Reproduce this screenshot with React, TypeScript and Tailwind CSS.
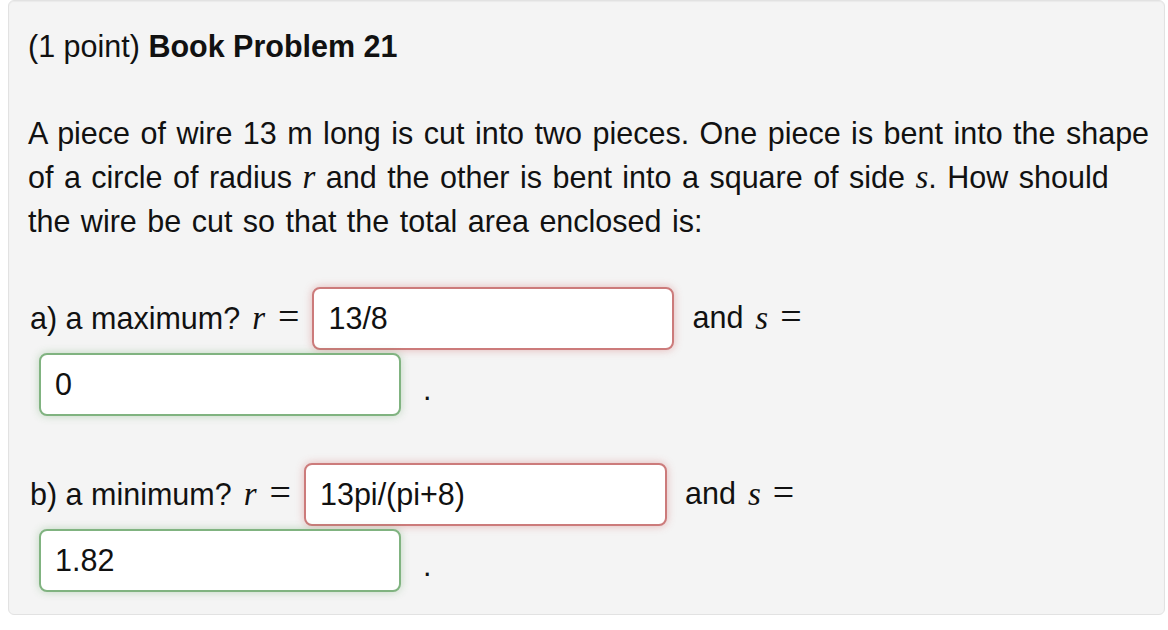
import React from "react";

function Answer({ value, status, width = "w-[362px]" }: { value: string; status: "bad" | "good"; width?: string }) {
  const cls =
    status === "bad"
      ? "border-[#cc7b7b] shadow-[0_0_9px_rgba(200,70,70,0.35)]"
      : "border-[#80b380] shadow-[0_0_9px_rgba(70,150,70,0.3)]";
  return (
    <div className={`${width} h-[63px] shrink-0 rounded-[8px] border-2 bg-white flex items-center pl-[14px] ${cls}`}>
      <span className="text-[30.5px] leading-none text-[#111]">{value}</span>
    </div>
  );
}

function MathVar({ v }: { v: string }) {
  return (
    <span className="font-['Liberation_Serif',serif] italic text-[33px] leading-none">{v}</span>
  );
}

function Eq() {
  return <span className="font-['Liberation_Serif',serif] text-[38px] leading-none">=</span>;
}

export default function App() {
  return (
    <div className="w-[1168px] h-[630px] bg-white font-['Liberation_Sans',Arial,sans-serif] text-[#111]">
      <div className="ml-[8px] w-[1157px] h-[615px] bg-[#f4f4f4] border border-[#e2e2e2] rounded-[6px] shadow-[inset_0_1px_1px_rgba(0,0,0,0.04)] pl-[19px] pr-[4px] pt-[23px]">
        <div className="text-[30.5px] leading-[44px]">
          (1 point) <span className="font-bold">Book Problem 21</span>
        </div>
        <p className="mt-[43px] text-[30.5px] leading-[44px] [word-spacing:2px] whitespace-nowrap">
          A piece of wire 13 m long is cut into two pieces. One piece is bent into the shape
          <br />
          of a circle of radius <MathVar v="r" /> and the other is bent into a square of side <MathVar v="s" />. How should
          <br />
          the wire be cut so that the total area enclosed is:
        </p>

        <div className="mt-[44px] flex items-center text-[30.5px]">
          <span className="ml-[2px]">a) a maximum?</span>
          <span className="ml-[12px]"><MathVar v="r" /></span>
          <span className="ml-[13px]"><Eq /></span>
          <span className="ml-[13px]"><Answer value="13/8" status="bad" /></span>
          <span className="ml-[18px] -mt-[2px]">and</span>
          <span className="ml-[12px]"><MathVar v="s" /></span>
          <span className="ml-[12px]"><Eq /></span>
        </div>
        <div className="mt-[3px] ml-[11px] flex items-end text-[30.5px]">
          <Answer value="0" status="good" />
          <span className="ml-[22px] mb-[12px] leading-none">.</span>
        </div>

        <div className="mt-[47px] flex items-center text-[30.5px]">
          <span className="ml-[2px]">b) a minimum?</span>
          <span className="ml-[12px]"><MathVar v="r" /></span>
          <span className="ml-[13px]"><Eq /></span>
          <span className="ml-[13px]"><Answer value="13pi/(pi+8)" status="bad" width="w-[363px]" /></span>
          <span className="ml-[18px] -mt-[2px]">and</span>
          <span className="ml-[12px]"><MathVar v="s" /></span>
          <span className="ml-[12px]"><Eq /></span>
        </div>
        <div className="mt-[3px] ml-[11px] flex items-end text-[30.5px]">
          <Answer value="1.82" status="good" />
          <span className="ml-[22px] mb-[12px] leading-none">.</span>
        </div>
      </div>
    </div>
  );
}
